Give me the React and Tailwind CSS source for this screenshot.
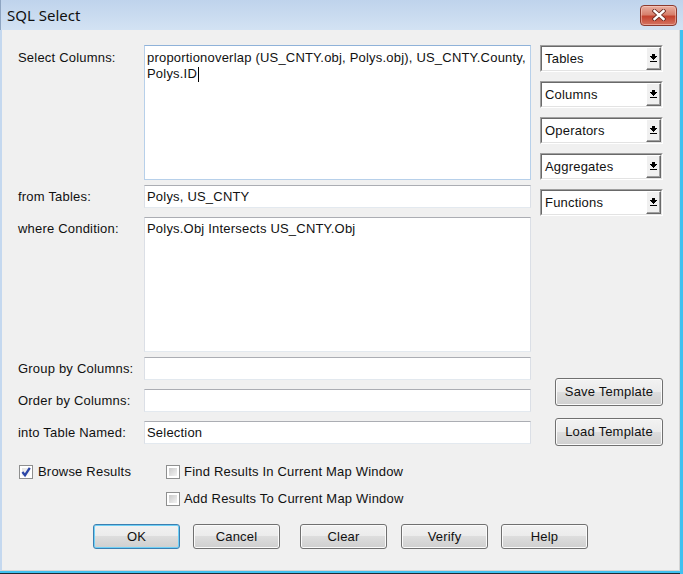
import React from "react";

function Field({ children, focused, className = "" }) {
  const border = focused
    ? "border border-[#b7d0ea] border-t-[#8fb2d9]"
    : "border border-t-[#abadb3] border-l-[#dbdfe6] border-r-[#dbdfe6] border-b-[#e3e9ef]";
  return <div className={`bg-white w-[387px] pl-[2px] ${border} ${className}`}>{children}</div>;
}

function Arrow() {
  return (
    <svg width="7" height="8" viewBox="0 0 7 8" shapeRendering="crispEdges">
      <rect x="2" y="0" width="3" height="2" fill="#000" />
      <rect x="0" y="2" width="7" height="1" fill="#000" />
      <rect x="1" y="3" width="5" height="1" fill="#000" />
      <rect x="2" y="4" width="3" height="1" fill="#000" />
      <rect x="3" y="5" width="1" height="1" fill="#000" />
      <rect x="0" y="7" width="7" height="1" fill="#000" />
    </svg>
  );
}

function Drop({ label }) {
  return (
    <div className="h-[27px] w-[123px] border border-t-[#a0a0a0] border-l-[#a0a0a0] border-r-white border-b-white flex">
      <div className="flex-1 flex border border-t-[#696969] border-l-[#696969] border-r-[#e3e3e3] border-b-[#e3e3e3] bg-white">
        <div className="flex-1 flex items-center pl-[3px] pt-[1px]">{label}</div>
        <div className="w-[15px] border border-t-white border-l-white border-r-[#696969] border-b-[#696969] flex">
          <div className="flex-1 bg-[#f0f0f0] border-r border-b border-r-[#a0a0a0] border-b-[#a0a0a0] flex items-center justify-center">
            <Arrow />
          </div>
        </div>
      </div>
    </div>
  );
}

function Btn({ children, def, className = "" }) {
  const border = def
    ? "border-[#3c7fb1] shadow-[inset_0_0_0_1px_#6fd0f6]"
    : "border-[#707070] shadow-[inset_0_0_0_1px_#fbfbfb]";
  return (
    <div
      className={`h-[25px] w-[87px] rounded-[3px] border ${border} bg-[linear-gradient(#f2f2f2,#ebebeb_50%,#dddddd_50%,#cfcfcf)] flex items-center justify-center ${className}`}
    >
      {children}
    </div>
  );
}

function Check({ checked }) {
  return (
    <div className="relative w-[14px] h-[14px] border border-[#8e8f8f] bg-white p-[2px] flex shrink-0">
      <div
        className={`flex-1 ${
          checked
            ? "bg-[linear-gradient(135deg,#e4e4e4,#fbfbfb)]"
            : "bg-[linear-gradient(135deg,#c9c9c9,#f3f3f3)]"
        }`}
      />
      {checked && (
        <svg className="absolute left-0 top-0" width="12" height="12" viewBox="0 0 12 12">
          <path d="M2.4 6 L5 9.2 L9.8 1.8" stroke="#2b46a8" strokeWidth="2.3" fill="none" strokeLinejoin="miter" />
        </svg>
      )}
    </div>
  );
}

export default function App() {
  return (
    <div className="w-[683px] h-[574px] flex flex-col overflow-hidden font-['Liberation_Sans',Arial,sans-serif] text-[13px] tracking-[0.2px] text-[#111]">
      {/* Title bar */}
      <div className="h-[30px] shrink-0 flex items-center justify-between pl-[6px] pr-[6px] bg-[linear-gradient(#bfd3ec,#d3e2f3)] border-l border-l-[#8ea5c2]">
        <div className="font-['Noto_Sans',sans-serif] text-[15px] tracking-normal text-[#101010]">SQL Select</div>
        <div className="w-[37px] h-[21px] rounded-[4px] border border-[#8c3a2f] bg-[linear-gradient(#eab0a2,#d7806d_45%,#c4432f_55%,#d57462)] shadow-[inset_0_0_0_1px_rgba(255,220,210,0.45)] flex items-center justify-center">
          <svg width="14" height="12" viewBox="0 0 14 12">
            <path d="M2.5 2 L11.5 10 M11.5 2 L2.5 10" stroke="#6a2b22" strokeWidth="4.2" strokeLinecap="square" />
            <path d="M2.5 2 L11.5 10 M11.5 2 L2.5 10" stroke="#ffffff" strokeWidth="2.4" strokeLinecap="square" />
          </svg>
        </div>
      </div>

      {/* Body */}
      <div className="flex-1 flex flex-col border-r-[3px] border-r-[#3fc1f0]">
        <div className="flex-1 flex flex-col bg-[#f0f0f0] border-l-2 border-l-[#c4d8ef] border-r border-r-[#d4d4d4] border-b border-b-[#d4d4d4] pl-[16px] pt-[15px]">
          <div className="flex">
            {/* Left fields */}
            <div className="flex flex-col w-[513px]">
              <div className="flex h-[135px]">
                <div className="w-[126px] pt-[5px] leading-[16px]">Select Columns:</div>
                <Field focused className="h-[135px] pt-[4px] leading-[16px] whitespace-nowrap">
                  <div>proportionoverlap (US_CNTY.obj, Polys.obj), US_CNTY.County,</div>
                  <div className="flex items-center">
                    Polys.ID<span className="inline-block w-[1px] h-[15px] bg-black ml-[1px]" />
                  </div>
                </Field>
              </div>
              <div className="flex h-[23px] mt-[5px] items-center">
                <div className="w-[126px]">from Tables:</div>
                <Field className="h-[23px] flex items-center">Polys, US_CNTY</Field>
              </div>
              <div className="flex h-[135px] mt-[9px]">
                <div className="w-[126px] pt-[4px] leading-[16px]">where Condition:</div>
                <Field className="h-[135px] pt-[3px] leading-[16px]">Polys.Obj Intersects US_CNTY.Obj</Field>
              </div>
              <div className="flex h-[23px] mt-[5px] items-center">
                <div className="w-[126px]">Group by Columns:</div>
                <Field className="h-[23px]" />
              </div>
              <div className="flex h-[23px] mt-[9px] items-center">
                <div className="w-[126px]">Order by Columns:</div>
                <Field className="h-[23px]" />
              </div>
              <div className="flex h-[23px] mt-[9px] items-center">
                <div className="w-[126px]">into Table Named:</div>
                <Field className="h-[23px] flex items-center">Selection</Field>
              </div>
            </div>

            {/* Right column */}
            <div className="ml-[9px] w-[123px] flex flex-col">
              <div className="flex flex-col gap-[9px]">
                <Drop label="Tables" />
                <Drop label="Columns" />
                <Drop label="Operators" />
                <Drop label="Aggregates" />
                <Drop label="Functions" />
              </div>
              <Btn className="mt-[162px] ml-[15px] !w-[108px] !h-[28px]">Save Template</Btn>
              <Btn className="mt-[12px] ml-[15px] !w-[108px] !h-[28px]">Load Template</Btn>
            </div>
          </div>

          {/* Checkboxes */}
          <div className="flex mt-[19px] h-[14px] items-center">
            <div className="flex items-center w-[148px] pl-[1px]">
              <Check checked />
              <span className="ml-[5px]">Browse Results</span>
            </div>
            <Check />
            <span className="ml-[4px]">Find Results In Current Map Window</span>
          </div>
          <div className="flex mt-[13px] h-[14px] items-center pl-[148px]">
            <Check />
            <span className="ml-[4px]">Add Results To Current Map Window</span>
          </div>

          {/* Buttons */}
          <div className="flex mt-[18px]">
            <Btn def className="ml-[75px]">OK</Btn>
            <Btn className="ml-[13px]">Cancel</Btn>
            <Btn className="ml-[20px]">Clear</Btn>
            <Btn className="ml-[14px]">Verify</Btn>
            <Btn className="ml-[13px]">Help</Btn>
          </div>
        </div>
        <div className="h-[2px] shrink-0 bg-[#3fc1f0]" />
        <div className="h-[1px] shrink-0 bg-[#1e2a30]" />
      </div>
    </div>
  );
}
